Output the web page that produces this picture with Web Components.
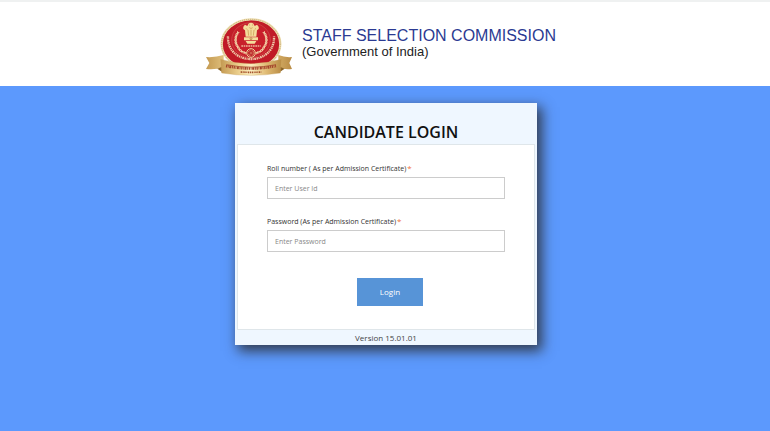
<!DOCTYPE html>
<html lang="en">
<head>
<meta charset="utf-8">
<title>Candidate Login</title>
<style>
body {
  margin: 0;
  min-height: 100vh;
  background: #5c99fd;
  font-family: "Open Sans", "Liberation Sans", sans-serif;
}
</style>
</head>
<body>

<site-header>
  <ssc-emblem slot="logo"></ssc-emblem>
  <span slot="name">STAFF SELECTION COMMISSION</span>
  <span slot="sub">(Government of India)</span>
</site-header>

<main>
  <login-card version="Version 15.01.01">
    <span slot="title">CANDIDATE LOGIN</span>
    <login-field name="user" placeholder="Enter User Id">Roll number ( As per Admission Certificate)</login-field>
    <login-field name="password" type="password" placeholder="Enter Password">Password (As per Admission Certificate)</login-field>
    <login-button slot="action">Login</login-button>
  </login-card>
</main>

<script>
// leaves of the left branch; the right one is its mirror image
function branch(n) {
    let out = ''
    for (let i = 0; i < n; i++) {
        let deg = Math.round(115 + i * 95 / (n - 1))
        let a = deg * Math.PI / 180
        let x = Math.round(153 + 46 * Math.cos(a))
        let y = Math.round(84 + 42 * Math.sin(a))
        out += `<ellipse cx="${x}" cy="${y}" rx="6" ry="2" transform="rotate(${deg + 55} ${x} ${y})"/>`
        out += `<ellipse cx="${x}" cy="${y}" rx="6" ry="2" transform="rotate(${deg + 125} ${x} ${y})"/>`
    }
    return out
}

customElements.define('ssc-emblem', class extends HTMLElement {
    constructor() {
        super()
        let sr = this.attachShadow({mode: 'open'})
        sr.innerHTML = `
<style>
:host { display: block; }
svg { display: block; width: 86px; height: 58px; }
</style>
<svg viewBox="18 18 258 174" role="img" aria-label="Staff Selection Commission emblem">
  <defs>
    <linearGradient id="gold">
      <stop offset="0" stop-color="#c49a52"/>
      <stop offset=".3" stop-color="#ecd08e"/>
      <stop offset=".5" stop-color="#fbeec0"/>
      <stop offset=".75" stop-color="#e0bb74"/>
      <stop offset="1" stop-color="#b98c45"/>
    </linearGradient>
    <g id="branch" fill="#f0c9a0">${branch(9)}</g>
  </defs>

  <!-- seal -->
  <ellipse cx="153" cy="96" rx="88" ry="74" fill="#c01a26" stroke="#ecdcae" stroke-width="7"/>
  <ellipse cx="153" cy="96" rx="88" ry="74" fill="none" stroke="#b8975a" stroke-width="3" stroke-dasharray="2 4"/>
  <ellipse cx="153" cy="86" rx="72" ry="60" fill="#c01c28"/>
  <ellipse cx="153" cy="84" rx="58" ry="52" fill="#c81f2b" stroke="#d98572" stroke-width="1"/>
  <use href="#branch"/>
  <use href="#branch" transform="matrix(-1 0 0 1 306 0)"/>

  <!-- lettering band -->
  <path d="M84 73C80 164 226 164 222 73" fill="none" stroke="#efcaa8" stroke-width="7" stroke-dasharray="4 2 3 2 5 2"/>

  <!-- lion capital -->
  <g fill="#f4dc9c">
    <path d="M142 42q3-10 11-10t11 10l7-4q7 5 5 13l-5 4-2 19h-32l-2-19-5-4q-2-8 5-13z"/>
    <path d="M132 76h42v9h-42zM137 87h32l-5 8h-22z"/>
  </g>
  <path d="M147 39h3M156 39h3M148 47q5 5 10 0M144 54l2 17M153 53v18M162 54l-2 17M138 49l4 4M168 49l-4 4" fill="none" stroke="#c4934a" stroke-width="2"/>
  <circle cx="153" cy="80" r="3" fill="none" stroke="#a86c30" stroke-width="2"/>
  <path d="M124 102h58" stroke="#eeb79a" stroke-width="4" stroke-dasharray="5 2"/>

  <!-- wheel -->
  <circle cx="153" cy="123" r="13" fill="#b91f26" stroke="#f2d49c" stroke-width="3"/>
  <circle cx="153" cy="123" r="8" fill="none" stroke="#edc48f" stroke-width="6" stroke-dasharray="1 3"/>
  <circle cx="153" cy="123" r="2" fill="#f2d49c"/>

  <!-- ribbon -->
  <path d="M18 135q27 2 53-6v37q-25 8-53 5l10-18zM276 135q-21 2-41-6v37q18 8 41 5l-8-18z" fill="url(#gold)"/>
  <path d="M52 170l18-7v19zM254 170l-18-7v19z" fill="#8c6428"/>
  <path d="M62 142q90 26 182 0l-3 41q-88 14-176 0z" fill="url(#gold)" stroke="#c59d55" stroke-width="1"/>
  <path d="M78 162q75 15 150 0" fill="none" stroke="#a5452c" stroke-width="8" stroke-dasharray="4 2 2 2 6 2 3 2"/>
  <path d="M79 158q75 15 149 0" fill="none" stroke="#9c3a22" stroke-width="2"/>
  <path d="M122 180q31 2 62 0" fill="none" stroke="#a4512c" stroke-width="5" stroke-dasharray="4 2 3 2"/>
</svg>`
    }
})

customElements.define('site-header', class extends HTMLElement {
    constructor() {
        super()
        let sr = this.attachShadow({mode: 'open'})
        sr.innerHTML = `
<style>
:host { display: block; background: #fff; border-top: 2px solid #eff1f1; }
header {
  display: flex;
  justify-content: center;
  align-items: flex-start;
  gap: 10px;
  padding: 16px 8px 10px 0;
  font-family: "Liberation Sans", Arial, sans-serif;
}
.text { display: flex; flex-direction: column; padding-top: 10px; }
.name { display: block; font-size: 16px; line-height: 16px; color: #2b3a92; }
.sub { display: block; font-size: 13px; line-height: 15px; color: #222; }
</style>
<header>
  <slot name="logo"></slot>
  <div class="text">
    <slot class="name" name="name"></slot>
    <slot class="sub" name="sub"></slot>
  </div>
</header>`
    }
})

customElements.define('login-field', class extends HTMLElement {
    constructor() {
        super()
        let type = this.getAttribute('type') || 'text'
        let sr = this.attachShadow({mode: 'open'})
        sr.innerHTML = `
<style>
:host { display: block; }
label { display: block; font-size: 7px; line-height: 16px; color: #333; }
b { padding-left: 1px; color: #f0703c; font-size: 8px; line-height: 1; font-weight: 400; }
input {
  display: block;
  box-sizing: border-box;
  width: 100%;
  height: 22px;
  padding: 0 7px;
  border: 1px solid #ccc;
  background: #fff;
  font: 7px "Open Sans", sans-serif;
  color: #333;
}
input::placeholder { color: #888; }
</style>
<label for="box"><slot></slot><b>*</b></label>
<input id="box" type="${type}" name="${this.getAttribute('name')}" placeholder="${this.getAttribute('placeholder')}">`
    }
})

customElements.define('login-button', class extends HTMLElement {
    constructor() {
        super()
        let sr = this.attachShadow({mode: 'open'})
        sr.innerHTML = `
<style>
:host { display: block; }
button {
  display: block;
  padding: 0 23px;
  border: 0;
  background: #5794d7;
  font: 8px/28px "Open Sans", sans-serif;
  color: #fff;
}
</style>
<button type="button"><slot></slot></button>`
    }
})

customElements.define('login-card', class extends HTMLElement {
    constructor() {
        super()
        let sr = this.attachShadow({mode: 'open'})
        sr.innerHTML = `
<style>
:host { display: block; padding: 17px 0 0 2px; }
section {
  box-sizing: border-box;
  max-width: 302px;
  margin: 0 auto;
  padding: 0 2px;
  background: #eff7ff;
  box-shadow: 4px 5px 12px 1px rgba(45, 50, 60, .9);
}
h1 { margin: 0; padding-top: 18px; font-size: 16px; line-height: 23px; font-weight: 600; text-align: center; color: #111; }
form {
  display: flex;
  flex-direction: column;
  gap: 15px;
  padding: 16px 29px 23px;
  border: 1px solid #dfe6ea;
  background: #fff;
}
.action { display: flex; justify-content: center; padding: 11px 0 0 8px; }
footer { font-size: 8px; line-height: 15px; text-align: center; color: #444; }
</style>
<section>
  <h1><slot name="title"></slot></h1>
  <form>
    <slot></slot>
    <div class="action"><slot name="action"></slot></div>
  </form>
  <footer>${this.getAttribute('version')}</footer>
</section>`
    }
})
</script>
</body>
</html>
